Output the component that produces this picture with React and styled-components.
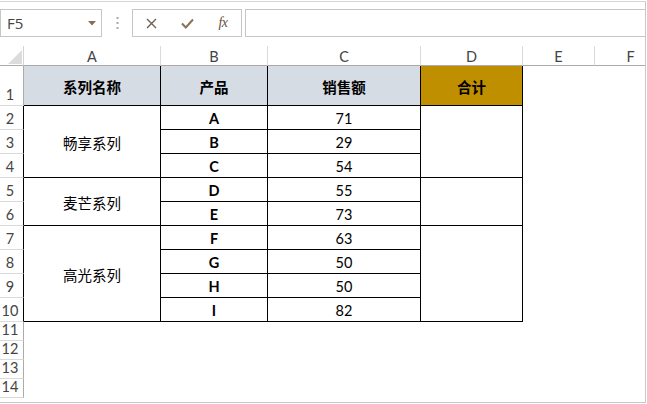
import React from 'react'
import styled, { createGlobalStyle } from 'styled-components'

const GlobalStyle = createGlobalStyle`
  html, body {
    margin: 0;
    padding: 0;
    background: #fff;
  }
  body {
    font-family: "Lato", "Noto Sans CJK SC", sans-serif;
  }
  * {
    box-sizing: border-box;
  }
`

const Frame = styled.div`
  margin-top: 1px;
  width: 646px;
  height: 402px;
  border-top: 1px solid #d5d5d5;
  border-right: 1px solid #c8c8c8;
  border-bottom: 1px solid #c8c8c8;
  display: flex;
  flex-direction: column;
  overflow: hidden;
`

const FormulaBar = styled.div`
  margin-top: 7px;
  height: 28px;
  display: flex;
  align-items: stretch;
`

const NameBox = styled.div`
  width: 102px;
  border: 1px solid #c6c6c6;
  display: flex;
  align-items: center;
  justify-content: space-between;
  padding: 0 5px 0 6px;
  font-family: "Open Sans", "Liberation Sans", sans-serif;
  font-size: 15px;
  color: #444;
`

const Grip = styled.div`
  width: 30px;
  display: flex;
  align-items: center;
  justify-content: center;
`

const ButtonGroup = styled.div`
  width: 110px;
  border: 1px solid #c6c6c6;
  display: flex;
  align-items: center;
  gap: 12px;
  padding-left: 6px;
`

const IconButton = styled.span`
  width: 24px;
  display: flex;
  align-items: center;
  justify-content: center;
`

const Fx = styled.span`
  font-family: "Liberation Serif", "DejaVu Serif", serif;
  font-style: italic;
  font-size: 14px;
  color: #6b4e3f;
  letter-spacing: -0.5px;
`

const FormulaInput = styled.div`
  flex: 1;
  margin-left: 3px;
  border: 1px solid #c6c6c6;
  border-right: none;
`

const Sheet = styled.div`
  margin-top: 9px;
  flex: 1;
  display: grid;
  grid-template-columns: 24px 137px 107px 153px 102px 72px 72px;
  grid-template-rows: 20px 40px repeat(9, 24px) repeat(4, 19px) 1fr;
`

const Corner = styled.div`
  grid-row: 1;
  grid-column: 1;
  border-right: 1px solid #d5d5d5;
  border-bottom: 1px solid #ababab;
  position: relative;
`

const CornerMark = styled.svg`
  position: absolute;
  right: 1px;
  bottom: 1px;
`

const ColHead = styled.div`
  grid-row: 1;
  grid-column: ${(p) => p.$col};
  border-right: 1px solid #dadada;
  border-bottom: 1px solid #ababab;
  display: flex;
  align-items: center;
  justify-content: center;
  font-size: 14.5px;
  color: #444;
  padding-top: 1px;
`

const RowHead = styled.div`
  grid-row: ${(p) => p.$row};
  grid-column: 1;
  border-right: 1px solid ${(p) => (p.$edge ? '#000' : '#ababab')};
  border-bottom: 1px solid #dadada;
  display: flex;
  align-items: flex-end;
  justify-content: center;
  padding: 0 3px 2px 0;
  font-size: 14.5px;
  line-height: 16px;
  color: #444;
`

const Cell = styled.div`
  grid-row: ${(p) => p.$row} / span ${(p) => p.$span || 1};
  grid-column: ${(p) => p.$col};
  background: ${(p) => p.$fill || '#fff'};
  border-right: 1px solid #000;
  border-bottom: 1px solid #000;
  display: flex;
  align-items: center;
  justify-content: center;
  font-size: 14.5px;
  font-weight: ${(p) => (p.$bold ? 700 : 400)};
  color: #000;
  padding-top: 1px;
`

const columns = ['A', 'B', 'C', 'D', 'E', 'F']

const headers = [
  { text: '系列名称', fill: '#d6dce4' },
  { text: '产品', fill: '#d6dce4' },
  { text: '销售额', fill: '#d6dce4' },
  { text: '合计', fill: '#bf8f00' },
]

const series = [
  { name: '畅享系列', items: [['A', 71], ['B', 29], ['C', 54]] },
  { name: '麦芒系列', items: [['D', 55], ['E', 73]] },
  { name: '高光系列', items: [['F', 63], ['G', 50], ['H', 50], ['I', 82]] },
]

const ROW_COUNT = 14

const CloseIcon = () => (
  <svg width="11" height="11" viewBox="0 0 11 11">
    <path d="M1 1 L10 10 M10 1 L1 10" stroke="#6d6057" strokeWidth="1.4" fill="none" />
  </svg>
)

const CheckIcon = () => (
  <svg width="13" height="11" viewBox="0 0 13 11">
    <path d="M1 5.5 L4.8 9.5 L12 1.5" stroke="#8a7157" strokeWidth="2" fill="none" />
  </svg>
)

const DropArrow = () => (
  <svg width="8" height="5" viewBox="0 0 8 5">
    <path d="M0 0 H8 L4 4.5 Z" fill="#8a6d55" />
  </svg>
)

const GripDots = () => (
  <svg width="3" height="12" viewBox="0 0 3 12">
    <rect x="0.5" y="0" width="2" height="2" fill="#a8a8a8" />
    <rect x="0.5" y="5" width="2" height="2" fill="#a8a8a8" />
    <rect x="0.5" y="10" width="2" height="2" fill="#a8a8a8" />
  </svg>
)

function renderBody() {
  const cells = []
  let row = 3
  series.forEach((group) => {
    const span = group.items.length
    cells.push(
      <Cell key={`name-${row}`} $row={row} $span={span} $col={2}>
        {group.name}
      </Cell>
    )
    group.items.forEach(([product, sales], i) => {
      cells.push(
        <Cell key={`p-${row + i}`} $row={row + i} $col={3} $bold>
          {product}
        </Cell>,
        <Cell key={`s-${row + i}`} $row={row + i} $col={4}>
          {sales}
        </Cell>
      )
    })
    cells.push(<Cell key={`sum-${row}`} $row={row} $span={span} $col={5} />)
    row += span
  })
  return cells
}

export default function App() {
  return (
    <>
      <GlobalStyle />
      <Frame>
        <FormulaBar>
          <NameBox>
            <span>F5</span>
            <DropArrow />
          </NameBox>
          <Grip>
            <GripDots />
          </Grip>
          <ButtonGroup>
            <IconButton><CloseIcon /></IconButton>
            <IconButton><CheckIcon /></IconButton>
            <IconButton><Fx>fx</Fx></IconButton>
          </ButtonGroup>
          <FormulaInput />
        </FormulaBar>

        <Sheet>
          <Corner>
            <CornerMark width="14" height="14" viewBox="0 0 14 14">
              <path d="M14 0 V14 H0 Z" fill="#dcdcdc" />
            </CornerMark>
          </Corner>
          {columns.map((c, i) => (
            <ColHead key={c} $col={i + 2}>{c}</ColHead>
          ))}
          {Array.from({ length: ROW_COUNT }, (_, i) => (
            <RowHead key={i} $row={i + 2} $edge={i >= 1 && i <= 9}>
              {i + 1}
            </RowHead>
          ))}
          {headers.map((h, i) => (
            <Cell key={h.text} $row={2} $col={i + 2} $fill={h.fill} $bold>
              {h.text}
            </Cell>
          ))}
          {renderBody()}
        </Sheet>
      </Frame>
    </>
  )
}
